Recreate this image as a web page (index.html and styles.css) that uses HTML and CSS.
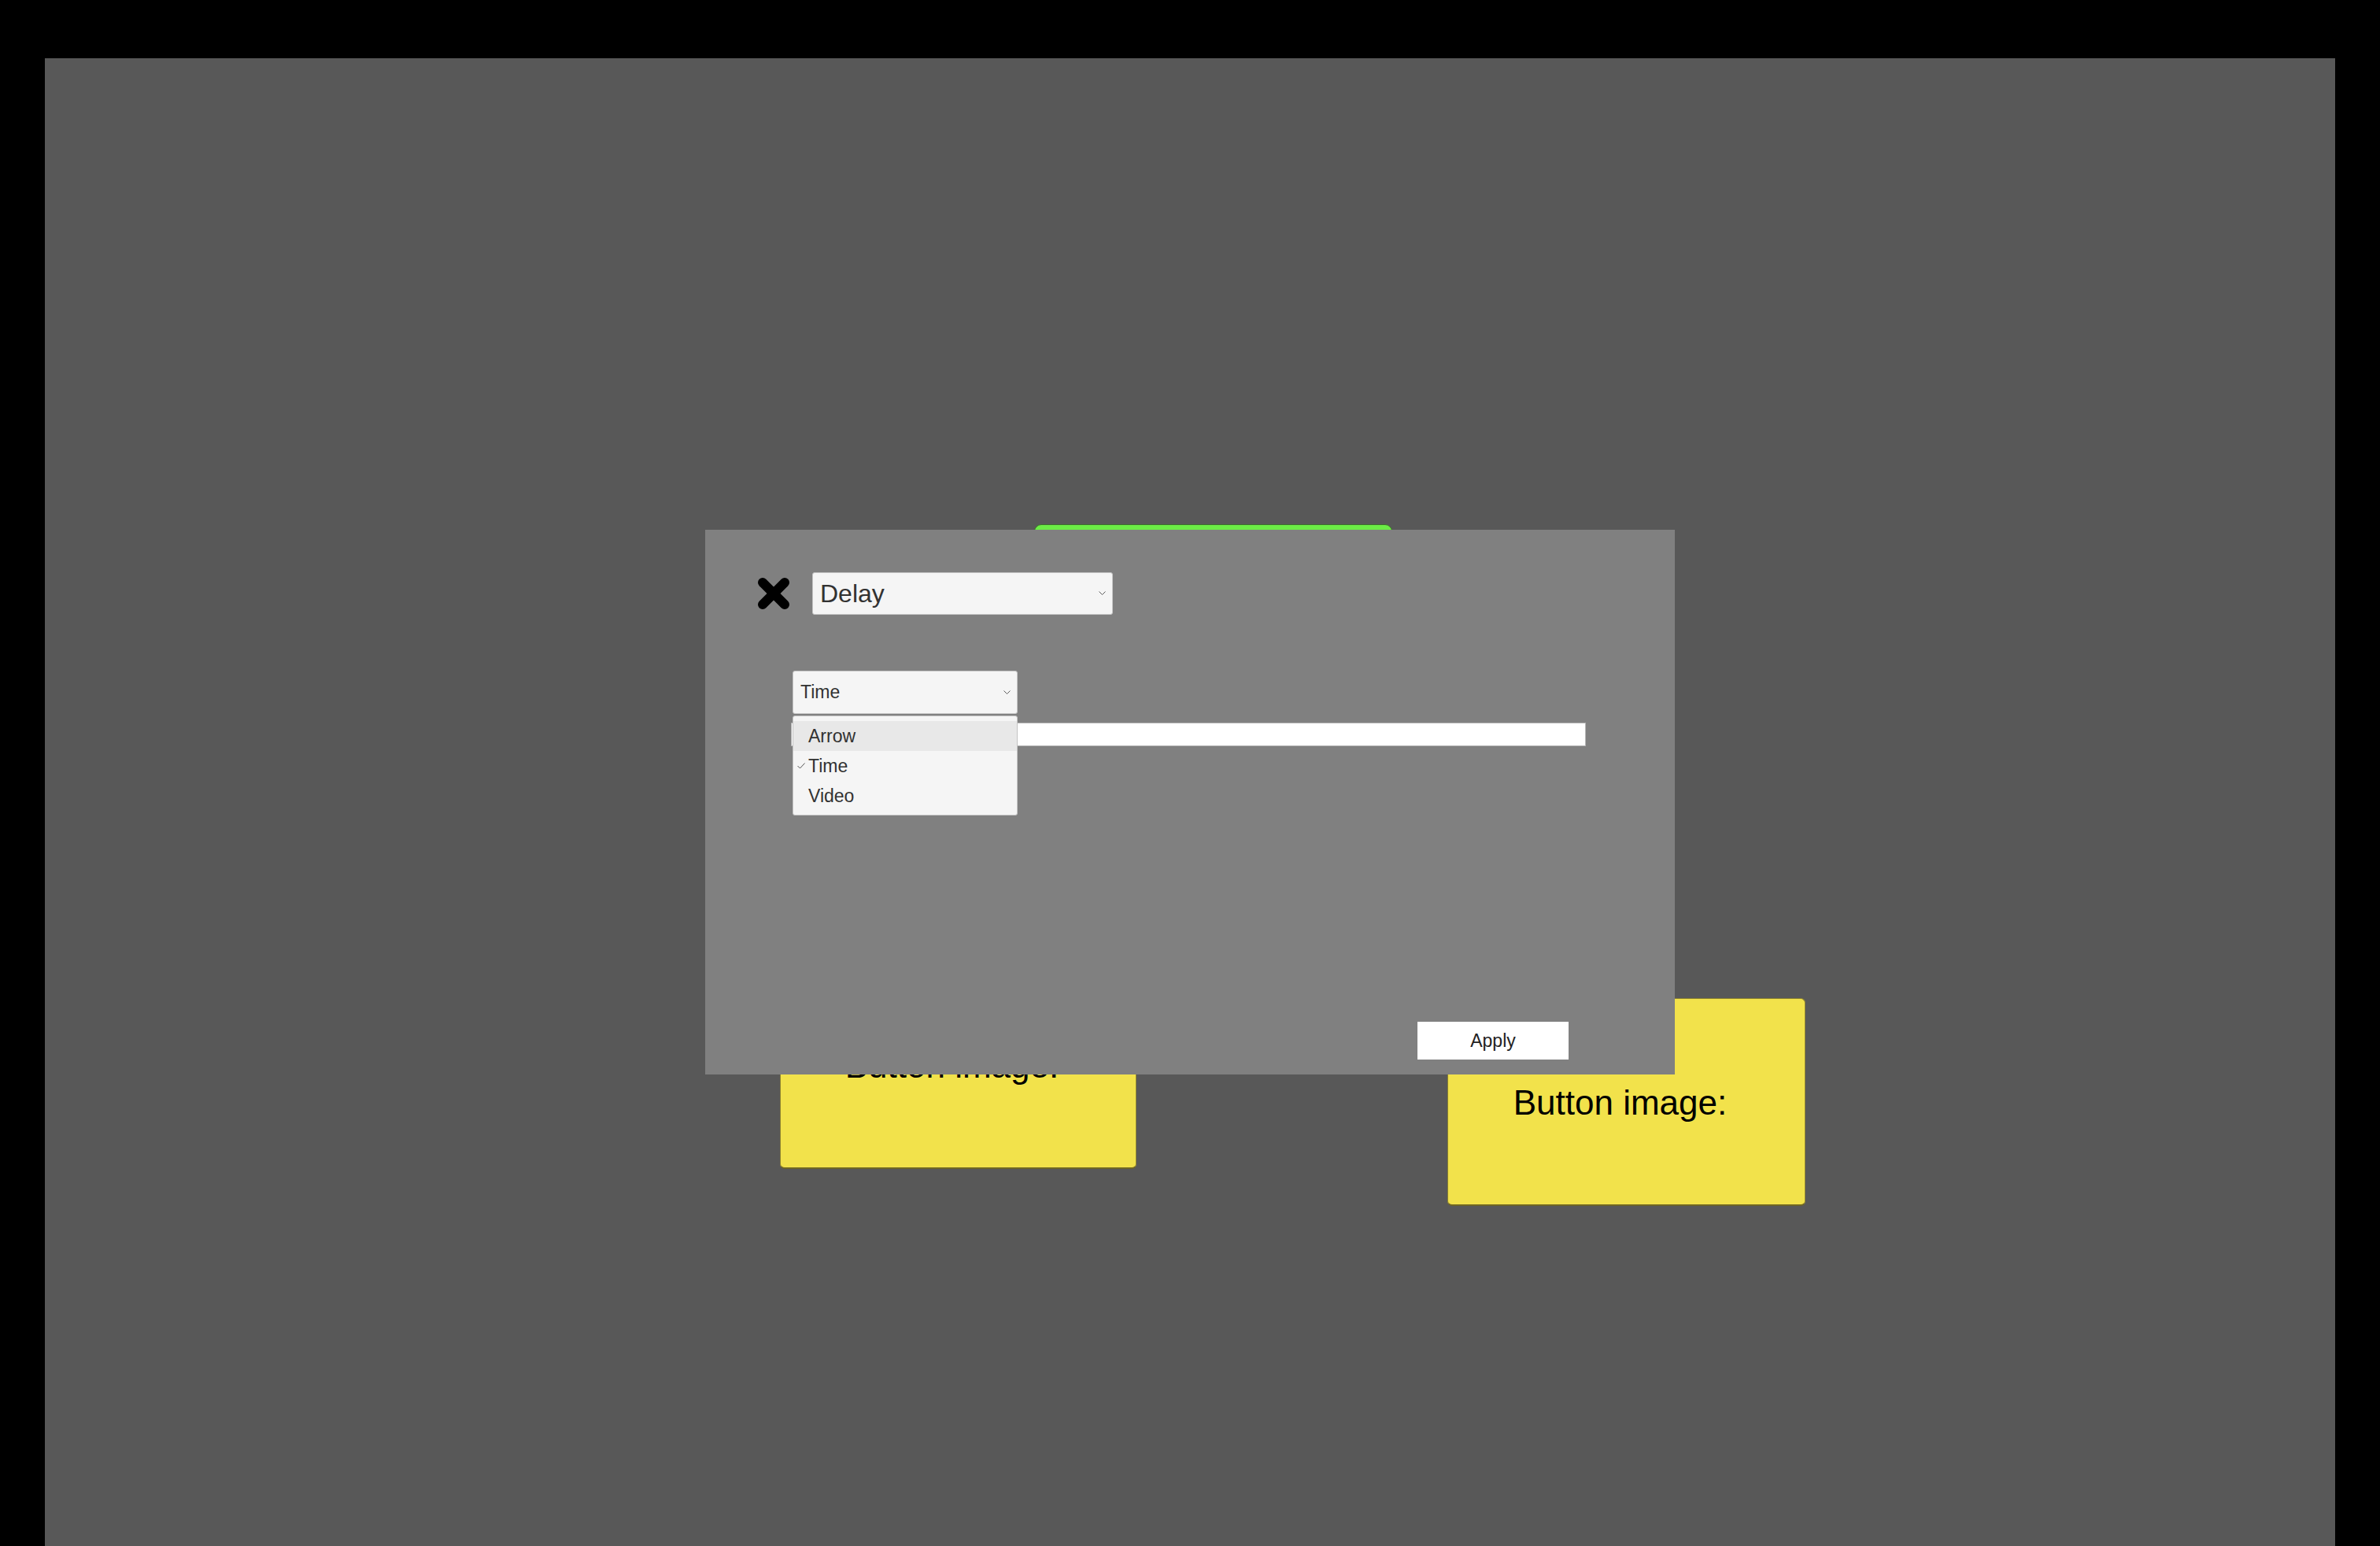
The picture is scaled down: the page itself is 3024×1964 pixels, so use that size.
FILE: index.html
```html
<!DOCTYPE html>
<html>
<head>
<meta charset="utf-8">
<link rel="stylesheet" href="styles.css">
</head>
<body>
<div class="canvas">
  <div class="card card-green"></div>
  <div class="card card-yellow card-left"><span class="card-label">Button image:</span></div>
  <div class="card card-yellow card-right"><span class="card-label">Button image:</span></div>

  <div class="dialog">
    <div class="header-row">
      <svg class="close-icon" viewBox="0 0 42 42" width="42" height="42">
        <line x1="7" y1="7" x2="35" y2="35" stroke="#000" stroke-width="12" stroke-linecap="round"/>
        <line x1="35" y1="7" x2="7" y2="35" stroke="#000" stroke-width="12" stroke-linecap="round"/>
      </svg>
      <div class="select select-main">
        <span class="select-text">Delay</span>
        <svg class="chevron" viewBox="0 0 9 6" width="9" height="6"><polyline points="0.5,0.5 4.5,4.5 8.5,0.5" fill="none" stroke="#5a5a5a" stroke-width="1"/></svg>
      </div>
    </div>

    <div class="form-block">
      <div class="select select-sub">
        <span class="select-text">Time</span>
        <svg class="chevron" viewBox="0 0 9 6" width="9" height="6"><polyline points="0.5,0.5 4.5,4.5 8.5,0.5" fill="none" stroke="#5a5a5a" stroke-width="1"/></svg>
      </div>
      <div class="text-input"></div>
      <ul class="dropdown">
        <li class="option option-hover"><span class="check"></span>Arrow</li>
        <li class="option"><span class="check"><svg viewBox="0 0 10 8" width="10" height="8"><polyline points="0.5,4 3.5,7 9.5,0.5" fill="none" stroke="#555" stroke-width="1"/></svg></span>Time</li>
        <li class="option"><span class="check"></span>Video</li>
      </ul>
    </div>

    <button class="apply-btn">Apply</button>
  </div>
</div>
</body>
</html>
```

FILE: styles.css
```css
* {
  box-sizing: border-box;
}

html, body {
  margin: 0;
  padding: 0;
  background: #000;
  height: 100%;
  overflow: hidden;
  font-family: "Liberation Sans", Arial, sans-serif;
}

.canvas {
  position: relative;
  margin: 74px 0 0 57px;
  width: 2910px;
  height: 1890px;
  background: #585858;
}

.card {
  position: absolute;
}

.card-green {
  left: 1257px;
  top: 592px;
  width: 455px;
  height: 220px;
  background: #6cec46;
  border: 1px solid #3d6f2c;
  border-radius: 9px 9px 0 0;
}

.card-yellow {
  width: 455px;
  height: 264px;
  background: #f2e24b;
  border: 1px solid #8c8230;
  border-bottom: 2px solid #6f6624;
  border-radius: 6px;
  text-align: center;
  padding: 110px 16px 0 0;
}

.card-left {
  left: 934px;
  top: 1147px;
  width: 453px;
}

.card-right {
  left: 1782px;
  top: 1194px;
}

.card-label {
  font-size: 44px;
  line-height: 44px;
  color: #000;
}

.dialog {
  position: absolute;
  left: 839px;
  top: 599px;
  width: 1232px;
  height: 692px;
  background: #808080;
  display: flex;
  flex-direction: column;
  padding: 54px 135px 19px 66px;
}

.header-row {
  display: flex;
  align-items: center;
  gap: 28px;
  height: 54px;
}

.close-icon {
  display: block;
  flex: none;
}

.select {
  display: flex;
  align-items: center;
  justify-content: space-between;
  background: #f5f5f5;
  border: 1px solid #c4c4c4;
  border-radius: 3px;
  color: #323232;
  padding: 0 8px 0 9px;
}

.select-main {
  width: 382px;
  height: 54px;
}

.select-main .select-text {
  font-size: 32px;
}

.select-sub {
  width: 286px;
  height: 55px;
}

.select-sub .select-text {
  font-size: 23px;
}

.chevron {
  display: block;
  flex: none;
}

.form-block {
  position: relative;
  margin: 71px 0 0 45px;
}

.text-input {
  margin: 11px 0 0 -2px;
  width: 1010px;
  height: 30px;
  background: #fff;
  border: 1px solid #b4b4b4;
}

.dropdown {
  position: absolute;
  left: 0;
  top: 57px;
  width: 286px;
  height: 127px;
  margin: 0;
  padding: 6px 0 0;
  list-style: none;
  background: #f5f5f5;
  border: 1px solid #c4c4c4;
  border-radius: 3px;
}

.option {
  display: flex;
  align-items: center;
  height: 38px;
  font-size: 23px;
  color: #323232;
}

.option-hover {
  background: #e8e8e8;
}

.check {
  display: flex;
  align-items: center;
  justify-content: center;
  width: 18px;
  margin-left: 1px;
  height: 38px;
}

.check svg {
  display: block;
}

.apply-btn {
  margin-top: auto;
  align-self: flex-end;
  width: 192px;
  height: 48px;
  background: #fff;
  border: none;
  border-radius: 0;
  font-family: "Liberation Sans", Arial, sans-serif;
  font-size: 23px;
  color: #222;
  padding: 0;
}
```
